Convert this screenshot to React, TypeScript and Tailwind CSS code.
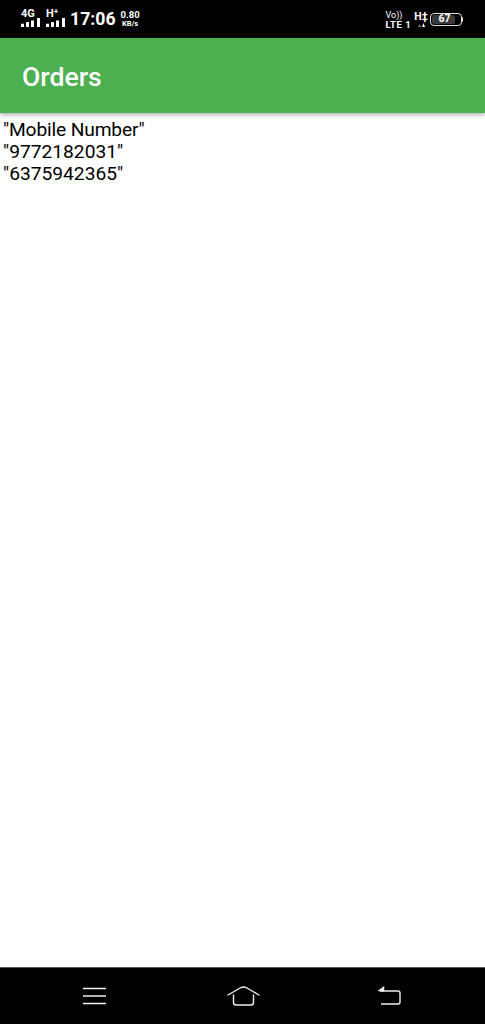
function Bars() {
  return (
    <svg width="21" height="9" viewBox="0 0 21 11" preserveAspectRatio="none" fill="#fff" className="block">
      <rect x="0" y="7" width="3" height="4" />
      <rect x="5" y="5" width="3" height="6" />
      <rect x="10" y="3" width="3" height="8" />
      <rect x="16" y="0" width="3" height="11" />
    </svg>
  );
}

function StatusBar() {
  return (
    <div className="h-[38px] bg-black text-white flex items-center shrink-0 relative">
      <div className="flex items-center pl-[21px] pb-[1px]">
        <div className="w-[25px] flex flex-col">
          <span className="text-[11px] leading-[8px] font-bold">4G</span>
          <Bars />
        </div>
        <div className="w-[24px] flex flex-col">
          <span className="text-[11px] leading-[8px] font-bold">H⁺</span>
          <Bars />
        </div>
        <span className="text-[17.7px] leading-[20px] font-bold">17:06</span>
        <div className="flex flex-col items-center ml-[5px] font-bold">
          <span className="text-[9.5px] leading-[10px]">0.80</span>
          <span className="text-[7.5px] leading-[8px]">KB/s</span>
        </div>
      </div>
      <div className="ml-auto flex items-center pr-[22px] pt-[1px]">
        <div className="flex flex-col items-start font-bold w-[27px]">
          <span className="text-[9px] leading-[9px] font-normal">Vo))</span>
          <span className="text-[9.5px] leading-[9px] tracking-[0.5px]">LTE 1</span>
        </div>
        <div className="flex flex-col items-center w-[17px]">
          <span className="text-[10.5px] leading-[10px] font-bold">H‡</span>
          <svg width="9" height="5" viewBox="0 0 9 5" fill="#fff" className="block">
            <path d="M1 5 L2.5 2 L4 5 Z" opacity="0.5" />
            <path d="M5 5 L6.5 1 L8 5 Z" />
          </svg>
        </div>
        <div className="flex items-center">
          <div className="w-[32px] h-[13px] rounded-[4px] border border-[#ddd] p-[1px] flex">
            <div className="w-[23px] h-full rounded-[2px] bg-[#3a3a3a] flex items-center justify-center text-[10.5px] leading-none font-bold pl-[3px]">
              67
            </div>
          </div>
          <div className="w-[1.5px] h-[5px] bg-[#ddd] rounded-r-sm" />
        </div>
      </div>
    </div>
  );
}

function NavBar() {
  return (
    <div className="h-[57px] bg-black border-t border-[#555] shrink-0 relative flex items-center justify-between pl-[83px] pr-[84px] pb-[1px]">
      <svg width="23" height="18" viewBox="0 0 23 18" fill="none" stroke="#eee" strokeWidth="1.4">
        <path d="M0 1.5 H23 M0 9 H23 M0 16.5 H23" />
      </svg>
      <svg width="33" height="20" viewBox="0 0 33 20" fill="none" stroke="#eee" strokeWidth="1.4" strokeLinecap="round" strokeLinejoin="round" className="ml-[3px]">
        <path d="M1 9 L14 1.5 Q16.5 0.5 19 1.5 L32 9" />
        <path d="M6.5 9 V16.5 Q6.5 19 9 19 H24 Q26.5 19 26.5 16.5 V9" />
      </svg>
      <svg width="24" height="19" viewBox="0 0 24 19" fill="none" stroke="#eee" strokeWidth="1.4" strokeLinejoin="round">
        <path d="M3 5 H21 Q23 5 23 7 V16 Q23 18 21 18 H4" />
        <path d="M7 0.5 L1 4.8 L7 5.5 Z" fill="#eee" strokeWidth="0.5" />
      </svg>
    </div>
  );
}

export default function App() {
  return (
    <div className="h-[1024px] w-[485px] flex flex-col bg-white overflow-hidden font-['Roboto',sans-serif]">
      <StatusBar />
      <div className="h-[75px] bg-[#4caf50] shrink-0 flex items-center pl-[22px] pt-[3px] shadow-[0_2px_4px_rgba(0,0,0,0.3)] z-10">
        <h1 className="text-white text-[26.6px] font-medium leading-none">Orders</h1>
      </div>
      <div className="flex-1 pt-[6px] pl-[3px] text-black text-[19.2px] leading-[22px]">
        <div className="tracking-[-0.15px]">"Mobile Number"</div>
        <div>"9772182031"</div>
        <div>"6375942365"</div>
      </div>
      <NavBar />
    </div>
  );
}
